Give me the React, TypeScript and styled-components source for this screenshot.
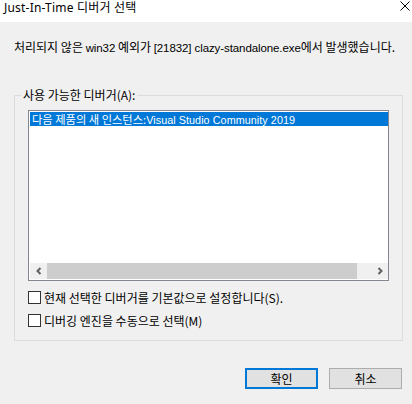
import React from "react";
import styled, { createGlobalStyle } from "styled-components";

const Global = createGlobalStyle`
  html, body { margin: 0; padding: 0; }
  body {
    background: #f0f0f0;
    font-family: "Noto Sans CJK KR", sans-serif;
    font-size: 12px;
    color: #000;
  }
`;

const Window = styled.div`
  width: 412px;
  height: 404px;
  background: #f0f0f0;
  display: flex;
  flex-direction: column;
  overflow: hidden;
`;

const TitleBar = styled.div`
  height: 22px;
  background: #fff;
  display: flex;
  align-items: flex-start;
  justify-content: space-between;
  padding: 0 2px 0 4px;
  box-sizing: border-box;
`;

const Title = styled.div`
  font-family: "Noto Sans", "Noto Sans CJK KR", sans-serif;
  line-height: 16px;
  font-size: 12px;
  letter-spacing: 0.2px;
`;

const Close = styled.svg`
  width: 10px;
  height: 10px;
  margin-top: 1px;
`;

const Body = styled.div`
  display: flex;
  flex-direction: column;
  padding: 17px 10px 0 14px;
`;

const Lat = styled.span<{ $spacing?: number }>`
  font-family: "Liberation Sans", sans-serif;
  font-size: 0.96em;
  letter-spacing: ${(p) => (p.$spacing ?? -0.1)}px;
  line-height: 1;
`;

const Message = styled.div`
  line-height: 16px;
  white-space: nowrap;
`;

const Group = styled.fieldset`
  margin: 32px 0 0 0;
  padding: 0 13px 13px 13px;
  border: 1px solid #dcdcdc;
  width: 389px;
  box-sizing: border-box;
  display: flex;
  flex-direction: column;
`;

const Legend = styled.legend`
  padding: 0 2px;
  margin-left: -7px;
  line-height: 16px;
`;

const ListBox = styled.div`
  margin-top: 7px;
  width: 361px;
  height: 171px;
  box-sizing: border-box;
  border: 1px solid #828790;
  background: #fff;
  display: flex;
  flex-direction: column;
  padding: 1px 0 1px 1px;
`;

const Items = styled.div`
  flex: 1;
`;

const Item = styled.div<{ $selected?: boolean }>`
  height: 14px;
  line-height: 14px;
  font-size: 11.25px;
  padding-left: 2px;
  white-space: nowrap;
  background: ${(p) => (p.$selected ? "#0078d7" : "transparent")};
  color: ${(p) => (p.$selected ? "#fff" : "#000")};
`;

const HScroll = styled.div`
  height: 16px;
  display: flex;
  background: #f0f0f0;
`;

const ArrowBtn = styled.div`
  width: 17px;
  display: flex;
  align-items: center;
  justify-content: center;
`;

const Track = styled.div`
  flex: 1;
  display: flex;
`;

const Thumb = styled.div`
  width: 310px;
  background: #cdcdcd;
`;

const CheckRow = styled.label`
  display: flex;
  align-items: center;
  gap: 3px;
  height: 13px;
  margin-top: 10px;
  white-space: nowrap;
`;

const Box = styled.span`
  width: 13px;
  height: 13px;
  box-sizing: border-box;
  border: 1px solid #333;
  background: #fff;
  flex: none;
`;

const CheckText = styled.span`
  line-height: 16px;
`;

const Buttons = styled.div`
  display: flex;
  justify-content: flex-end;
  gap: 11px;
  margin-top: 27px;
`;

const Button = styled.button<{ $primary?: boolean }>`
  width: 73px;
  height: 21px;
  box-sizing: border-box;
  margin: 0;
  padding: 0;
  font: inherit;
  color: #000;
  background: #e1e1e1;
  border: ${(p) => (p.$primary ? "2px solid #0078d7" : "1px solid #adadad")};
  line-height: 16px;
`;

const Chevron = ({ dir }: { dir: "l" | "r" }) => (
  <svg width="8" height="8" viewBox="0 0 8 8">
    <path
      d={dir === "l" ? "M5.5 1 L2.5 4 L5.5 7" : "M2.5 1 L5.5 4 L2.5 7"}
      stroke="#606060"
      strokeWidth="2"
      fill="none"
    />
  </svg>
);

export default function App() {
  return (
    <>
      <Global />
      <Window>
        <TitleBar>
          <Title>Just-In-Time 디버거 선택</Title>
          <Close viewBox="0 0 10 10">
            <path d="M0.5 0.5 L9.5 9.5 M9.5 0.5 L0.5 9.5" stroke="#000" strokeWidth="1" />
          </Close>
        </TitleBar>
        <Body>
          <Message>
            처리되지 않은 <Lat>win32</Lat> 예외가 <Lat>[21832] clazy-standalone.exe</Lat>에서 발생했습니다.
          </Message>
          <Group>
            <Legend>사용 가능한 디버거(A):</Legend>
            <ListBox>
              <Items>
                <Item $selected>
                  다음 제품의 새 인스턴스:<Lat $spacing={0.05}>Visual Studio Community 2019</Lat>
                </Item>
              </Items>
              <HScroll>
                <ArrowBtn>
                  <Chevron dir="l" />
                </ArrowBtn>
                <Track>
                  <Thumb />
                </Track>
                <ArrowBtn>
                  <Chevron dir="r" />
                </ArrowBtn>
              </HScroll>
            </ListBox>
            <CheckRow>
              <Box />
              <CheckText>현재 선택한 디버거를 기본값으로 설정합니다(S).</CheckText>
            </CheckRow>
            <CheckRow>
              <Box />
              <CheckText>디버깅 엔진을 수동으로 선택(M)</CheckText>
            </CheckRow>
          </Group>
          <Buttons>
            <Button $primary>확인</Button>
            <Button>취소</Button>
          </Buttons>
        </Body>
      </Window>
    </>
  );
}
